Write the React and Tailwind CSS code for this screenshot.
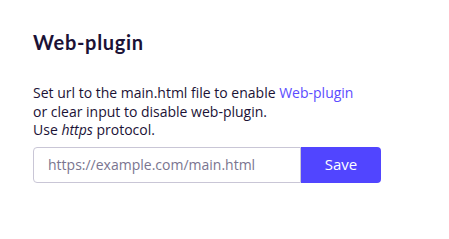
import React from 'react';

export default function App() {
  return (
    <div className="w-[449px] h-[239px] bg-white px-[33px] pt-[29px]" style={{ fontFamily: '"Open Sans", sans-serif' }}>
      <h2 className="text-[20px] font-bold leading-[26px] text-[#1b1236] tracking-[0.7px]" style={{ fontFamily: 'Lato, sans-serif' }}>
        Web-plugin
      </h2>
      <p className="mt-[29px] text-[14px] leading-[18.5px] text-[#1b1236]">
        Set url to the main.html file to enable <a className="text-[#5b4cff]">Web-plugin</a>
        <br />
        or clear input to disable web-plugin.
        <br />
        Use <i>https</i> protocol.
      </p>
      <div className="mt-[7px] flex w-[348px] h-[36px]">
        <input
          type="text"
          placeholder="https://example.com/main.html"
          className="flex-1 min-w-0 h-full px-[14px] text-[14px] text-[#1b1236] placeholder-[#7a7590] border border-[#c9c6d6] rounded-l-[4px] outline-none"
        />
        <button className="w-[80px] h-full bg-[#5145ff] text-white text-[15px] rounded-r-[4px]">Save</button>
      </div>
    </div>
  );
}
